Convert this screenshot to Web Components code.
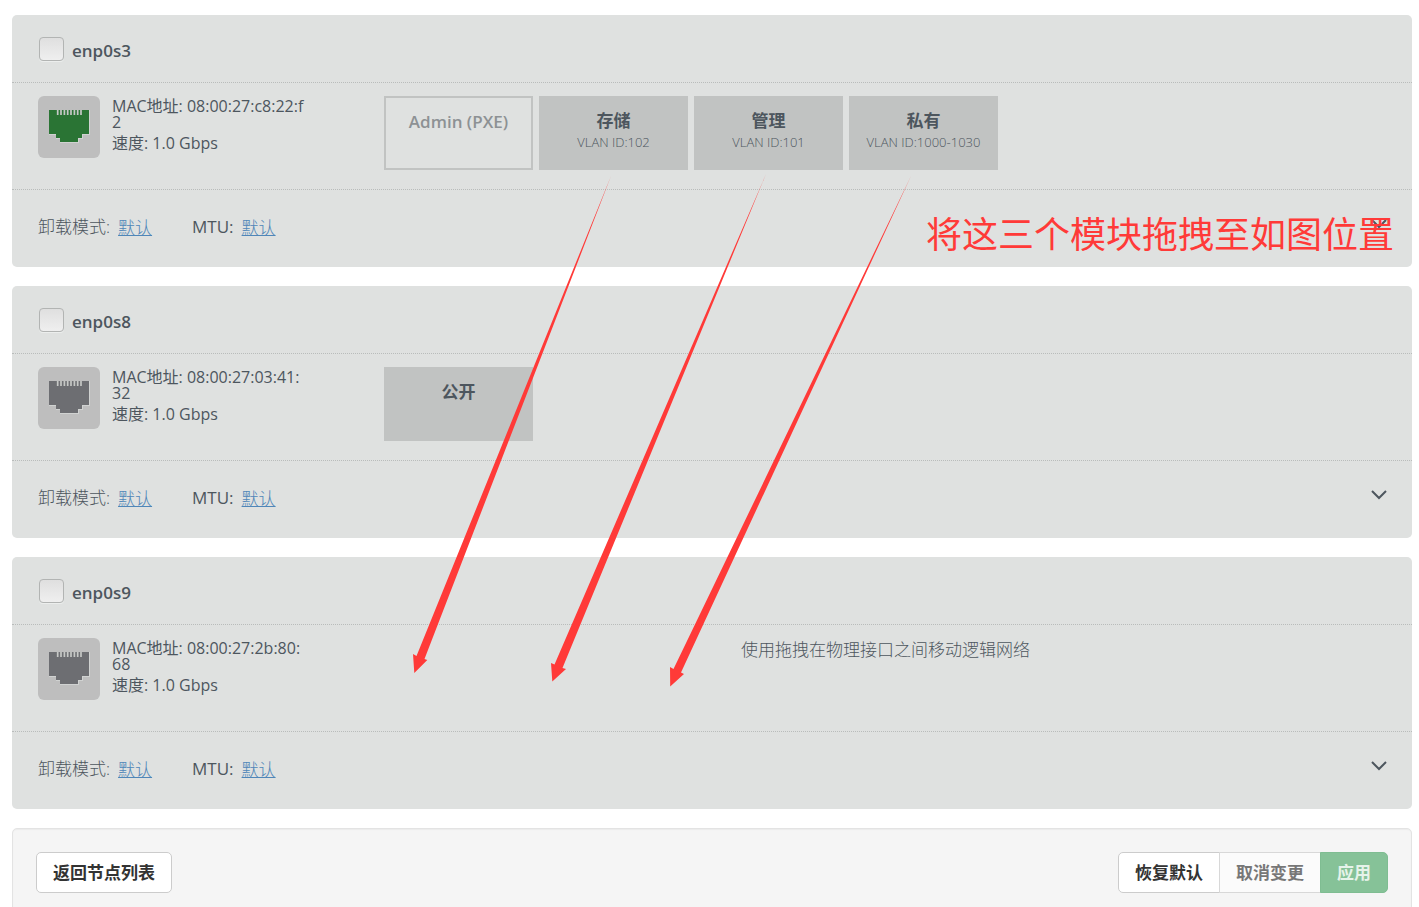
<!DOCTYPE html>
<html lang="zh-CN">
<head>
<meta charset="utf-8">
<title>配置网络接口</title>
<style>
  html { scrollbar-width: none; background: #fff; }
  body { margin: 0; font: 300 16px/24px "Open Sans", "Noto Sans CJK SC", sans-serif; color: #4d565e; }
</style>
</head>
<body>
<interfaces-page>
  <nic-card name="enp0s3" mac="08:00:27:c8:22:f2" online>
    <network-tile name="Admin (PXE)" fixed></network-tile>
    <network-tile name="存储" vlan="102"></network-tile>
    <network-tile name="管理" vlan="101"></network-tile>
    <network-tile name="私有" vlan="1000-1030"></network-tile>
  </nic-card>
  <nic-card name="enp0s8" mac="08:00:27:03:41:32">
    <network-tile name="公开"></network-tile>
  </nic-card>
  <nic-card name="enp0s9" mac="08:00:27:2b:80:68">
    <drop-hint>使用拖拽在物理接口之间移动逻辑网络</drop-hint>
  </nic-card>
  <action-bar slot="actions"></action-bar>
  <drag-guide slot="guide">将这三个模块拖拽至如图位置</drag-guide>
</interfaces-page>

<script>
const define = (name, html, setup) => customElements.define(name, class extends HTMLElement {
  connectedCallback() {
    if (this.shadowRoot) return;
    const t = document.createElement('template');
    t.innerHTML = html;
    this.attachShadow({ mode: 'open' }).append(t.content.cloneNode(true));
    if (setup) setup(this, s => this.shadowRoot.querySelector(s));
  }
});

define('interfaces-page', `
  <style>
    :host { display: block; position: relative; padding: 15px 7px 0 12px; overflow: hidden; }
    main { display: flex; flex-direction: column; gap: 19px; }
  </style>
  <main><slot></slot><slot name="actions"></slot></main>
  <slot name="guide"></slot>`);

define('port-icon', `
  <style>
    :host { display: block; flex: none; width: 62px; height: 62px; border-radius: 6px; background: #bebebe; --jack: #6d6e72; }
    :host([online]) { --jack: #2a7434; }
    svg { display: block; }
  </style>
  <svg width="62" height="62" viewBox="0 0 62 62" aria-hidden="true">
    <path d="M11 14H52V39H45V43H41V47H22V43H18V39H11Z" fill="#d0d2d1"/>
    <path d="M11 14H51V38H44V42H40V46H22V42H18V38H11Z" fill="var(--jack)"/>
    <path d="M19.700 14v5M23 14v5M26.400 14v5M29.700 14v5M33 14v5M36.400 14v5M39.700 14v5M43 14v5" stroke="#c6c8c6" stroke-width="1.700"/>
  </svg>`);

define('network-tile', `
  <style>
    :host { display: block; box-sizing: border-box; width: 149px; height: 74px; padding: 11px 4px; border: 2px solid #c1c3c2;
            background: #c1c3c2; text-align: center; cursor: move; }
    :host([fixed]) { background: transparent; color: #8d9194; cursor: default; }
    b { display: block; font-size: 17px; line-height: 24px; font-weight: 700; }
    :host([fixed]) b { font-weight: 600; line-height: 26px; }
    span { display: block; font-size: 13px; line-height: 18px; white-space: nowrap; }
  </style>
  <b></b><span></span>`, (el, $) => {
    $('b').textContent = el.getAttribute('name');
    if (el.hasAttribute('vlan')) $('span').textContent = 'VLAN ID:' + el.getAttribute('vlan');
    else $('span').remove();
  });

define('drop-hint', `
  <style>:host { display: block; flex: 1; text-align: center; font-size: 17px; line-height: 24px; }</style>
  <slot></slot>`);

define('nic-card', `
  <style>
    :host { display: block; border-radius: 5px; background: #dfe1e0; }
    header, .body { border-bottom: 1px dotted #b9bcbb; }
    header { display: flex; align-items: center; gap: 8px; height: 67px; padding: 0 26px 0 27px; }
    input { appearance: none; box-sizing: border-box; width: 25px; height: 24px; margin: 0; border: 1px solid #b2b4b3; border-radius: 4px;
            background: linear-gradient(#dfdfdf, #efefef); box-shadow: 0 1px 0 #eceeed; }
    label { font-size: 17px; font-weight: 600; padding-top: 4px; }
    .body { display: flex; height: 93px; padding: 13px 25px 0 26px; }
    .info { width: 196px; margin: 0 76px 0 12px; font-size: 16px; font-weight: 400; }
    .info p { margin: 0 0 5px; line-height: 16px; word-break: break-all; padding-top: 2px; }
    .info p + p { padding: 0; }
    .nets { display: flex; flex: 1; gap: 6px; }
    footer { display: flex; align-items: flex-start; height: 52px; padding: 25px 25px 0 26px; font-size: 17px; font-weight: 400; }
    .opt { display: flex; gap: 8px; margin-right: 40px; }
    .opt > span { white-space: nowrap; }
    .light { font-weight: 300; }
    a { color: #4f86b8; text-decoration: underline; line-height: 26px; font-weight: 300; }
    button { width: 18px; height: 18px; margin: 0 0 0 auto; padding: 0; border: 0; background: none; color: #4d565e; }
    svg { display: block; }
  </style>
  <header><input type="checkbox" id="pick"><label for="pick"></label></header>
  <div class="body">
    <port-icon></port-icon>
    <div class="info"><p class="mac"></p><p>速度: 1.0 Gbps</p></div>
    <div class="nets"><slot></slot></div>
  </div>
  <footer>
    <div class="opt"><span class="light">卸载模式:</span><a href="#offload">默认</a></div>
    <div class="opt"><span>MTU:</span><a href="#mtu">默认</a></div>
    <button type="button" aria-label="展开"><svg width="18" height="18" viewBox="0 0 18 18" fill="none" stroke="currentColor" stroke-width="2"><path d="M3 5L10 12L17 5"/></svg></button>
  </footer>`, (el, $) => {
    $('label').textContent = el.getAttribute('name');
    $('.mac').textContent = 'MAC地址: ' + el.getAttribute('mac');
    $('port-icon').toggleAttribute('online', el.hasAttribute('online'));
  });

define('action-bar', `
  <style>
    :host { display: flex; justify-content: space-between; padding: 23px; border: 1px solid #e3e3e3; border-radius: 5px;
            background: #f5f5f5; box-shadow: inset 0 1px 1px #ececec; }
    button { box-sizing: border-box; height: 41px; padding: 0 16px; border: 1px solid #ccc; border-radius: 5px; background: #fff;
             color: #333; font: 700 17px/24px "Open Sans", "Noto Sans CJK SC", sans-serif; }
    .group { display: flex; }
    .group button + button { margin-left: -1px; }
    .group button:first-child { border-radius: 5px 0 0 5px; }
    .group button:nth-child(2) { border-radius: 0; background: #fbfbfb; border-color: #d8d8d8; color: #777; }
    .group button:last-child { border-radius: 0 5px 5px 0; background: #86c298; border-color: #7fbd92; color: #e6f3ea; }
  </style>
  <button type="button">返回节点列表</button>
  <div class="group"><button type="button">恢复默认</button><button type="button" disabled>取消变更</button><button type="button" disabled>应用</button></div>`);

define('drag-guide', `
  <style>
    :host { position: absolute; inset: 0; pointer-events: none; color: #ff3a38; }
    svg { position: absolute; left: 0; top: 0; }
    p { position: absolute; right: 25px; top: 210px; margin: 0; font-size: 36px; font-weight: 400; line-height: 50px; white-space: nowrap; }
  </style>
  <svg width="1000" height="720" viewBox="0 0 1000 720" fill="currentColor" aria-hidden="true">
    <path d="M611 176L416.500 656L413 654L414.300 673L427.300 660L424.500 659Z"/>
    <path d="M766 174L554.500 664.500L551 663L552.300 681.500L566 669L562.500 668Z"/>
    <path d="M911 176L673.500 669L670 667L670.200 686.500L684 674L681 672.500Z"/>
  </svg>
  <p><slot></slot></p>`);
</script>
</body>
</html>
